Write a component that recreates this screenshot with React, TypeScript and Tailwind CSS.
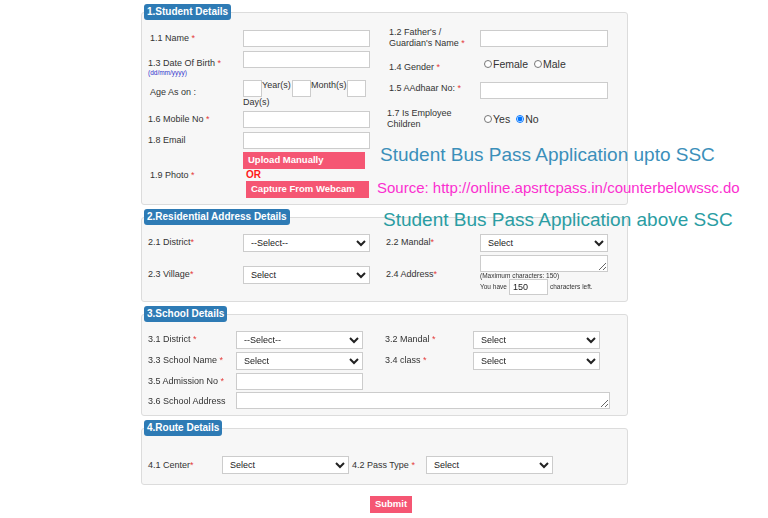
import React from "react";

const lbl = "text-[9px] leading-[11px] text-[#333]";
const input = "block h-[17px] shrink-0 border border-[#ccc] bg-white";
const select = "block h-[18px] border border-[#ccc] bg-white px-[3px] text-[9px] text-[#222]";

function Star({ spaced = true }: { spaced?: boolean }) {
  return <span className="text-[#e43b3b]">{spaced ? " *" : "*"}</span>;
}

function Section({ title, className, children }: { title: string; className: string; children: React.ReactNode }) {
  return (
    <div className="mt-1">
      <div className="relative z-10 flex h-4 pl-[3px]">
        <span className="rounded-[3px] bg-[#2e7bb5] px-[3px] text-[10px] font-bold leading-4 text-white">{title}</span>
      </div>
      <div className={"-mt-2 rounded-[3px] border border-[#dcdcdc] bg-[#f7f7f7] " + className}>{children}</div>
    </div>
  );
}

function Radio({ label, checked }: { label: string; checked?: boolean }) {
  return (
    <label className="mr-[6px] flex items-center text-[10.5px] leading-3 text-[#333]">
      <input type="radio" name={label === "Yes" || label === "No" ? "emp" : "gender"} defaultChecked={checked} className="mr-[1px] h-2 w-2" />
      {label}
    </label>
  );
}

export default function App() {
  return (
    <div className="relative min-h-[518px] w-[768px] bg-white pt-1 font-['Liberation_Sans',Arial,sans-serif]">
      <div className="-mt-1 ml-[141px] w-[487px]">
        {/* 1. Student details */}
        <Section title="1.Student Details" className="pb-1 pl-[6px] pt-[14px]">
          <div className="grid h-[21px] grid-cols-[95px_144px_93px_128px] items-center">
            <p className={lbl + " pl-[2px]"}>1.1 Name<Star /></p>
            <input className={input + " w-[127px]"} />
            <p className={lbl + " pl-[2px] leading-[10px]"}>
              1.2 Father's /<br />Guardian's Name<Star />
            </p>
            <input className={input + " w-[128px]"} />
          </div>
          <div className="grid h-[31px] grid-cols-[95px_144px_93px_128px] items-start">
            <div className="mt-[10px]">
              <p className={lbl}>1.3 Date Of Birth<Star /></p>
              <p className="text-[6.5px] leading-[7px] text-[#3333cc]">(dd/mm/yyyy)</p>
            </div>
            <input className={input + " mt-[3px] w-[127px]"} />
            <p className={lbl + " mt-[14px] pl-[2px]"}>1.4 Gender<Star /></p>
            <div className="mt-[10px] flex pl-[4px]">
              <Radio label="Female" />
              <Radio label="Male" />
            </div>
          </div>
          <div className="grid h-[29px] grid-cols-[95px_144px_93px_128px] items-start">
            <p className={lbl + " mt-[8px] pl-[2px]"}>Age As on :</p>
            <div className="mt-[1px]">
              <div className="flex items-start whitespace-nowrap text-[9px] leading-[11px] text-[#333]">
                <input className={input + " w-[19px]"} />
                <span className="w-[30px]">Year(s)</span>
                <input className={input + " w-[19px]"} />
                <span className="shrink-0">Month(s)</span>
                <input className={input + " w-[19px]"} />
              </div>
              <p className="text-[9px] leading-[10px] text-[#333]">Day(s)</p>
            </div>
            <p className={lbl + " mt-[4px] pl-[2px]"}>1.5 AAdhaar No:<Star /></p>
            <input className={input + " mt-[3px] w-[128px]"} />
          </div>
          <div className="grid h-[22px] grid-cols-[95px_144px_93px_128px] items-center">
            <p className={lbl}>1.6 Mobile No<Star /></p>
            <input className={input + " w-[127px]"} />
            <p className={lbl + " leading-[10px]"}>
              1.7 Is Employee<br />Children
            </p>
            <div className="flex pl-[4px]">
              <Radio label="Yes" />
              <Radio label="No" checked />
            </div>
          </div>
          <div className="grid h-[20px] grid-cols-[95px_144px_93px_128px] items-center">
            <p className={lbl}>1.8 Email</p>
            <input className={input + " w-[127px]"} />
          </div>
          <div className="grid h-[50px] grid-cols-[95px_144px_93px_128px] items-center">
            <p className={lbl + " pl-[2px]"}>1.9 Photo<Star /></p>
            <div className="self-start pt-[2px]">
              <button className="block h-[17px] w-[122px] bg-[#f55673] pl-[5px] text-left text-[9.5px] font-bold text-white">Upload Manually</button>
              <p className="pl-[3px] text-[10px] font-bold leading-[11px] text-[#ff1a1a]">OR</p>
              <button className="ml-[3px] mt-[1px] block h-[17px] w-[123px] bg-[#f55673] pl-[5px] text-left text-[9.5px] font-bold text-white">Capture From Webcam</button>
            </div>
          </div>
        </Section>

        {/* 2. Residential address */}
        <Section title="2.Residential Address Details" className="pb-[5px] pl-[6px] pt-[14px]">
          <div className="grid h-[21px] grid-cols-[95px_143px_94px_128px] items-center">
            <p className={lbl}>2.1 District<Star spaced={false} /></p>
            <select className={select + " w-[127px]"}><option>--Select--</option></select>
            <p className={lbl}>2.2 Mandal<Star spaced={false} /></p>
            <select className={select + " w-[128px]"}><option>Select</option></select>
          </div>
          <div className="grid h-[43px] grid-cols-[95px_143px_94px_128px] items-center">
            <p className={lbl}>2.3 Village<Star spaced={false} /></p>
            <select className={select + " w-[127px]"}><option>Select</option></select>
            <p className={lbl}>2.4 Address<Star spaced={false} /></p>
            <div>
              <textarea className="block h-[17px] w-[128px] border border-[#ccc] bg-white" />
              <p className="text-[6.5px] leading-[7px] text-[#333]">(Maximum characters: 150)</p>
              <div className="flex h-4 items-center text-[6.5px] text-[#333]">
                <span className="w-[29px]">You have</span>
                <input readOnly value="150" className="h-4 w-[39px] border border-[#ccc] bg-white px-[3px] text-[9px] text-[#222]" />
                <span className="ml-[2px]">characters left.</span>
              </div>
            </div>
          </div>
        </Section>

        {/* 3. School details */}
        <Section title="3.School Details" className="pb-1 pl-[6px] pt-[14px]">
          <div className="grid grid-cols-[88px_149px_88px_127px] grid-rows-[21px_21px_21px_19px] items-center">
            <p className={lbl}>3.1 District<Star /></p>
            <select className={select + " h-[17px] w-[127px]"}><option>--Select--</option></select>
            <p className={lbl}>3.2 Mandal<Star /></p>
            <select className={select + " h-[17px] w-[127px]"}><option>Select</option></select>

            <p className={lbl}>3.3 School Name<Star /></p>
            <select className={select + " h-[17px] w-[127px]"}><option>Select</option></select>
            <p className={lbl}>3.4 class<Star /></p>
            <select className={select + " h-[17px] w-[127px]"}><option>Select</option></select>

            <p className={lbl}>3.5 Admission No<Star /></p>
            <input className={input + " w-[127px]"} />
            <div />
            <div />

            <p className={lbl + " self-center"}>3.6 School Address</p>
            <textarea className="col-span-3 block h-[17px] w-[374px] self-start border border-[#ccc] bg-white" />
          </div>
        </Section>

        {/* 4. Route details */}
        <Section title="4.Route Details" className="pb-2 pl-[6px] pt-[25px]">
          <div className="flex h-[22px] items-center">
            <p className={lbl + " w-[74px]"}>4.1 Center<Star spaced={false} /></p>
            <select className={select + " w-[127px]"}><option>Select</option></select>
            <p className={lbl + " w-[77px] pl-[3px]"}>4.2 Pass Type<Star /></p>
            <select className={select + " w-[127px]"}><option>Select</option></select>
          </div>
        </Section>

        <button className="ml-[229px] mt-[11px] block h-[17px] w-[42px] bg-[#f55673] text-[9.5px] font-bold text-white">Submit</button>
      </div>

      {/* overlaid captions */}
      <p className="absolute left-[380px] top-[144px] whitespace-nowrap text-[19px] leading-[22px] text-[#3b8fba]">
        Student Bus Pass Application upto SSC
      </p>
      <p className="absolute left-[377px] top-[179px] whitespace-nowrap text-[15px] leading-[18px] text-[#fb2fd0]">
        Source: http://online.apsrtcpass.in/counterbelowssc.do
      </p>
      <p className="absolute left-[383px] top-[209px] whitespace-nowrap text-[19px] leading-[22px] text-[#2a9da3]">
        Student Bus Pass Application above SSC
      </p>
    </div>
  );
}
